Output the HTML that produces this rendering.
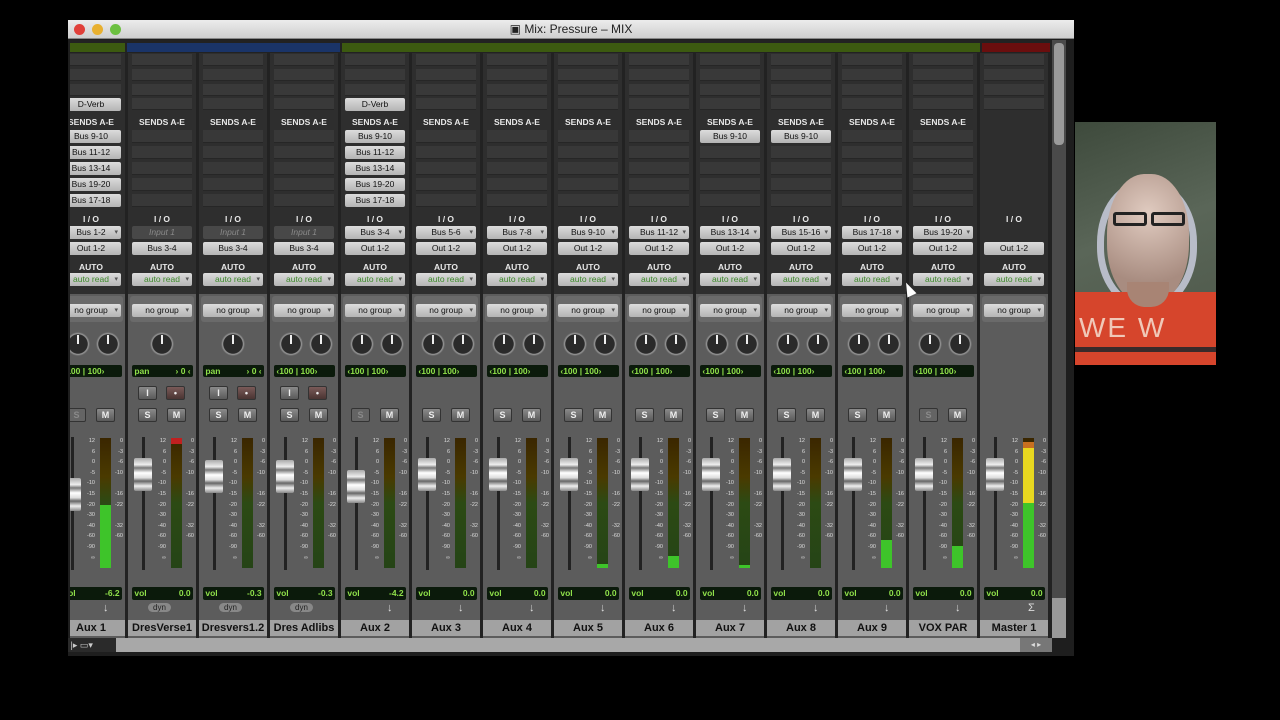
<!DOCTYPE html>
<html><head><meta charset="utf-8"><style>
*{margin:0;padding:0;box-sizing:border-box}
body{width:1280px;height:720px;background:#000;position:relative;overflow:hidden;font-family:"Liberation Sans",sans-serif}
.win{position:absolute;left:68px;top:20px;width:1006px;height:636px;background:#1e1e1e}
.title{position:absolute;left:0;top:0;width:1006px;height:19px;background:linear-gradient(#ececec,#cfcfcf);border-bottom:1px solid #888;font-size:12px;color:#222;text-align:center;line-height:19px}
.dot{position:absolute;top:4px;width:11px;height:11px;border-radius:50%}
.area{position:absolute;left:70px;top:40px;width:982px;height:598px;overflow:hidden;background:#222}
.cbar{position:absolute;top:3px;height:9px}
.s{position:absolute;top:13px;width:68px;height:585px;background:#2e2e2e}
.lo{position:absolute;left:0;top:241px;width:68px;height:344px;background:#5c5c5c}
.s div{position:absolute}
.sl{left:4px;width:60px;height:12px;background:#393939;border-bottom:1px solid #262626}
.ss{left:4px;width:60px;height:13px;background:#383838;border-bottom:1px solid #262626}
.lb{left:0;width:68px;text-align:center;font-size:8.5px;font-weight:bold;color:#e8e8e8}
.b{left:4px;width:60px;height:13px;background:linear-gradient(#dcdcdc,#b4b4b4);border-radius:2px;font-size:8.5px;color:#111;text-align:center;line-height:13px}
.b.dd:after{content:"▾";position:absolute;right:3px;top:0;font-size:7px;color:#555}
.b.dim{background:#484848;color:#8a8a8a;font-style:italic}
.ar{color:#3d8a2a}
.gp{left:2px;width:64px;height:26px;background:#6a6a6a;border-radius:3px}
.kn{width:24px;height:24px;border-radius:50%;background:radial-gradient(#2a2a2a 55%,#999 60%,#444 75%,#222 80%)}
.kn:after{content:"";position:absolute;left:11px;top:3px;width:2px;height:9px;background:#eee}
.dsp{left:4px;width:61px;height:12px;background:#0b1a0b;border-radius:2px;color:#8fe04a;font-size:8.5px;font-weight:bold;line-height:12px}
.sq{width:19px;height:14px;background:linear-gradient(#8a8a8a,#5a5a5a);border:1px solid #333;border-radius:2px;color:#eee;font-size:9px;font-weight:bold;text-align:center;line-height:12px}
.sq.d{color:#8a8a8a;background:#646464}
.rec{background:linear-gradient(#7a5a58,#4a3432)}
.trk{left:14px;top:384px;width:3px;height:133px;background:#222}
.cap{left:6px;width:18px;height:33px;background:linear-gradient(#aaa,#eee 20%,#777 30%,#fff 45%,#ddd 60%,#666 70%,#eee 85%,#888);border-radius:2px}
.sc{font-size:5.5px;color:#ddd;line-height:10.6px;text-align:right;width:12px}
.mt{left:43px;top:385px;width:11px;height:130px;background:linear-gradient(#3a2600,#4a3a00 30%,#2c4a14 50%,#254416)}
.mf{left:0;bottom:0;width:11px;background:#3ec42a}
.vol{left:4px;top:534px;width:61px;height:13px;background:#0b1a0b;border-radius:2px;color:#8fe04a;font-size:8.5px;font-weight:bold;line-height:13px}
.nm{left:0;top:567px;width:68px;height:16px;background:#a2a2a2;color:#111;font-size:11px;font-weight:bold;text-align:center;line-height:16px}
.ar2{color:#ddd;font-size:11px}
</style></head><body>
<div class="win">
<div class="title"><div class="dot" style="left:6px;background:#e0403a"></div><div class="dot" style="left:24px;background:#e8b030"></div><div class="dot" style="left:42px;background:#6cc040"></div>&#9635; Mix: Pressure –  MIX</div>
</div>
<div class="area">
<div class="cbar" style="left:0;width:55px;background:#3c5a10"></div>
<div class="cbar" style="left:57px;width:213px;background:#1a3468"></div>
<div class="cbar" style="left:272px;width:638px;background:#3c5a10"></div>
<div class="cbar" style="left:912px;width:68px;background:#6a0e0e"></div>

<div class="s" style="left:-13px"><div class="sl" style="top:1px"></div><div class="sl" style="top:16px"></div><div class="sl" style="top:31px"></div><div class="b" style="top:45px">D-Verb</div>
<div class="lb" style="top:64px">SENDS A-E</div><div class="b" style="top:77px">Bus 9-10</div><div class="b" style="top:93px">Bus 11-12</div><div class="b" style="top:109px">Bus 13-14</div><div class="b" style="top:125px">Bus 19-20</div><div class="b" style="top:141px">Bus 17-18</div>
<div class="lb" style="top:161px">I / O</div><div class="b dd" style="top:173px">Bus 1-2</div><div class="b" style="top:189px">Out 1-2</div><div class="lb" style="top:209px">AUTO</div><div class="b ar dd" style="top:220px">auto read</div>
<div class="lo"></div><div class="gp" style="top:243px"></div><div class="b dd" style="top:251px">no group</div>
<div class="kn" style="left:9px;top:279px"></div><div class="kn" style="left:39px;top:279px"></div><div class="dsp" style="top:312px">&nbsp;‹100 | 100›</div>
<div class="sq d" style="left:10px;top:355px">S</div><div class="sq" style="left:39px;top:355px">M</div>
<div class="trk"></div><div class="cap" style="top:425px"></div><div class="sc" style="left:26px;top:383px">12<br>6<br>0<br>-5<br>-10<br>-15<br>-20<br>-30<br>-40<br>-60<br>-90<br>∞</div><div class="mt"><div class="mf" style="height:63px"></div></div><div class="sc" style="left:54px;top:383px">0<br>-3<br>-6<br>-10<br><br>-16<br>-22<br><br>-32<br>-60</div>
<div class="vol">&nbsp;vol<span style="float:right">-6.2&nbsp;</span></div><div class="ar2" style="left:46px;top:549px">↓</div><div class="nm">Aux 1</div></div>

<div class="s" style="left:58px"><div class="sl" style="top:1px"></div><div class="sl" style="top:16px"></div><div class="sl" style="top:31px"></div><div class="sl" style="top:45px"></div>
<div class="lb" style="top:64px">SENDS A-E</div><div class="ss" style="top:77px"></div><div class="ss" style="top:93px"></div><div class="ss" style="top:109px"></div><div class="ss" style="top:125px"></div><div class="ss" style="top:141px"></div>
<div class="lb" style="top:161px">I / O</div><div class="b dim" style="top:173px">Input 1</div><div class="b" style="top:189px">Bus 3-4</div><div class="lb" style="top:209px">AUTO</div><div class="b ar dd" style="top:220px">auto read</div>
<div class="lo"></div><div class="gp" style="top:243px"></div><div class="b dd" style="top:251px">no group</div>
<div class="kn" style="left:22px;top:279px"></div><div class="dsp" style="top:312px">&nbsp;pan<span style="float:right">› 0 ‹&nbsp;</span></div>
<div class="sq" style="left:10px;top:333px">I</div><div class="sq rec" style="left:38px;top:333px">•</div>
<div class="sq" style="left:10px;top:355px">S</div><div class="sq" style="left:39px;top:355px">M</div>
<div class="trk"></div><div class="cap" style="top:405px"></div><div class="sc" style="left:26px;top:383px">12<br>6<br>0<br>-5<br>-10<br>-15<br>-20<br>-30<br>-40<br>-60<br>-90<br>∞</div><div class="mt"><div style="left:0;top:0;width:11px;height:6px;background:#c02020"></div></div><div class="sc" style="left:54px;top:383px">0<br>-3<br>-6<br>-10<br><br>-16<br>-22<br><br>-32<br>-60</div>
<div class="vol">&nbsp;vol<span style="float:right">0.0&nbsp;</span></div><div class="ar2" style="left:20px;top:550px;background:#888;border-radius:6px;color:#222;font-size:8px;padding:0 5px">dyn</div><div class="nm">DresVerse1</div></div>

<div class="s" style="left:129px"><div class="sl" style="top:1px"></div><div class="sl" style="top:16px"></div><div class="sl" style="top:31px"></div><div class="sl" style="top:45px"></div>
<div class="lb" style="top:64px">SENDS A-E</div><div class="ss" style="top:77px"></div><div class="ss" style="top:93px"></div><div class="ss" style="top:109px"></div><div class="ss" style="top:125px"></div><div class="ss" style="top:141px"></div>
<div class="lb" style="top:161px">I / O</div><div class="b dim" style="top:173px">Input 1</div><div class="b" style="top:189px">Bus 3-4</div><div class="lb" style="top:209px">AUTO</div><div class="b ar dd" style="top:220px">auto read</div>
<div class="lo"></div><div class="gp" style="top:243px"></div><div class="b dd" style="top:251px">no group</div>
<div class="kn" style="left:22px;top:279px"></div><div class="dsp" style="top:312px">&nbsp;pan<span style="float:right">› 0 ‹&nbsp;</span></div>
<div class="sq" style="left:10px;top:333px">I</div><div class="sq rec" style="left:38px;top:333px">•</div>
<div class="sq" style="left:10px;top:355px">S</div><div class="sq" style="left:39px;top:355px">M</div>
<div class="trk"></div><div class="cap" style="top:407px"></div><div class="sc" style="left:26px;top:383px">12<br>6<br>0<br>-5<br>-10<br>-15<br>-20<br>-30<br>-40<br>-60<br>-90<br>∞</div><div class="mt"></div><div class="sc" style="left:54px;top:383px">0<br>-3<br>-6<br>-10<br><br>-16<br>-22<br><br>-32<br>-60</div>
<div class="vol">&nbsp;vol<span style="float:right">-0.3&nbsp;</span></div><div class="ar2" style="left:20px;top:550px;background:#888;border-radius:6px;color:#222;font-size:8px;padding:0 5px">dyn</div><div class="nm">Dresvers1.2</div></div>

<div class="s" style="left:200px"><div class="sl" style="top:1px"></div><div class="sl" style="top:16px"></div><div class="sl" style="top:31px"></div><div class="sl" style="top:45px"></div>
<div class="lb" style="top:64px">SENDS A-E</div><div class="ss" style="top:77px"></div><div class="ss" style="top:93px"></div><div class="ss" style="top:109px"></div><div class="ss" style="top:125px"></div><div class="ss" style="top:141px"></div>
<div class="lb" style="top:161px">I / O</div><div class="b dim" style="top:173px">Input 1</div><div class="b" style="top:189px">Bus 3-4</div><div class="lb" style="top:209px">AUTO</div><div class="b ar dd" style="top:220px">auto read</div>
<div class="lo"></div><div class="gp" style="top:243px"></div><div class="b dd" style="top:251px">no group</div>
<div class="kn" style="left:9px;top:279px"></div><div class="kn" style="left:39px;top:279px"></div><div class="dsp" style="top:312px">&nbsp;‹100 | 100›</div>
<div class="sq" style="left:10px;top:333px">I</div><div class="sq rec" style="left:38px;top:333px">•</div>
<div class="sq" style="left:10px;top:355px">S</div><div class="sq" style="left:39px;top:355px">M</div>
<div class="trk"></div><div class="cap" style="top:407px"></div><div class="sc" style="left:26px;top:383px">12<br>6<br>0<br>-5<br>-10<br>-15<br>-20<br>-30<br>-40<br>-60<br>-90<br>∞</div><div class="mt"></div><div class="sc" style="left:54px;top:383px">0<br>-3<br>-6<br>-10<br><br>-16<br>-22<br><br>-32<br>-60</div>
<div class="vol">&nbsp;vol<span style="float:right">-0.3&nbsp;</span></div><div class="ar2" style="left:20px;top:550px;background:#888;border-radius:6px;color:#222;font-size:8px;padding:0 5px">dyn</div><div class="nm">Dres Adlibs</div></div>

<div class="s" style="left:271px"><div class="sl" style="top:1px"></div><div class="sl" style="top:16px"></div><div class="sl" style="top:31px"></div><div class="b" style="top:45px">D-Verb</div>
<div class="lb" style="top:64px">SENDS A-E</div><div class="b" style="top:77px">Bus 9-10</div><div class="b" style="top:93px">Bus 11-12</div><div class="b" style="top:109px">Bus 13-14</div><div class="b" style="top:125px">Bus 19-20</div><div class="b" style="top:141px">Bus 17-18</div>
<div class="lb" style="top:161px">I / O</div><div class="b dd" style="top:173px">Bus 3-4</div><div class="b" style="top:189px">Out 1-2</div><div class="lb" style="top:209px">AUTO</div><div class="b ar dd" style="top:220px">auto read</div>
<div class="lo"></div><div class="gp" style="top:243px"></div><div class="b dd" style="top:251px">no group</div>
<div class="kn" style="left:9px;top:279px"></div><div class="kn" style="left:39px;top:279px"></div><div class="dsp" style="top:312px">&nbsp;‹100 | 100›</div>
<div class="sq d" style="left:10px;top:355px">S</div><div class="sq" style="left:39px;top:355px">M</div>
<div class="trk"></div><div class="cap" style="top:417px"></div><div class="sc" style="left:26px;top:383px">12<br>6<br>0<br>-5<br>-10<br>-15<br>-20<br>-30<br>-40<br>-60<br>-90<br>∞</div><div class="mt"></div><div class="sc" style="left:54px;top:383px">0<br>-3<br>-6<br>-10<br><br>-16<br>-22<br><br>-32<br>-60</div>
<div class="vol">&nbsp;vol<span style="float:right">-4.2&nbsp;</span></div><div class="ar2" style="left:46px;top:549px">↓</div><div class="nm">Aux 2</div></div>

<div class="s" style="left:342px"><div class="sl" style="top:1px"></div><div class="sl" style="top:16px"></div><div class="sl" style="top:31px"></div><div class="sl" style="top:45px"></div>
<div class="lb" style="top:64px">SENDS A-E</div><div class="ss" style="top:77px"></div><div class="ss" style="top:93px"></div><div class="ss" style="top:109px"></div><div class="ss" style="top:125px"></div><div class="ss" style="top:141px"></div>
<div class="lb" style="top:161px">I / O</div><div class="b dd" style="top:173px">Bus 5-6</div><div class="b" style="top:189px">Out 1-2</div><div class="lb" style="top:209px">AUTO</div><div class="b ar dd" style="top:220px">auto read</div>
<div class="lo"></div><div class="gp" style="top:243px"></div><div class="b dd" style="top:251px">no group</div>
<div class="kn" style="left:9px;top:279px"></div><div class="kn" style="left:39px;top:279px"></div><div class="dsp" style="top:312px">&nbsp;‹100 | 100›</div>
<div class="sq" style="left:10px;top:355px">S</div><div class="sq" style="left:39px;top:355px">M</div>
<div class="trk"></div><div class="cap" style="top:405px"></div><div class="sc" style="left:26px;top:383px">12<br>6<br>0<br>-5<br>-10<br>-15<br>-20<br>-30<br>-40<br>-60<br>-90<br>∞</div><div class="mt"></div><div class="sc" style="left:54px;top:383px">0<br>-3<br>-6<br>-10<br><br>-16<br>-22<br><br>-32<br>-60</div>
<div class="vol">&nbsp;vol<span style="float:right">0.0&nbsp;</span></div><div class="ar2" style="left:46px;top:549px">↓</div><div class="nm">Aux 3</div></div>

<div class="s" style="left:413px"><div class="sl" style="top:1px"></div><div class="sl" style="top:16px"></div><div class="sl" style="top:31px"></div><div class="sl" style="top:45px"></div>
<div class="lb" style="top:64px">SENDS A-E</div><div class="ss" style="top:77px"></div><div class="ss" style="top:93px"></div><div class="ss" style="top:109px"></div><div class="ss" style="top:125px"></div><div class="ss" style="top:141px"></div>
<div class="lb" style="top:161px">I / O</div><div class="b dd" style="top:173px">Bus 7-8</div><div class="b" style="top:189px">Out 1-2</div><div class="lb" style="top:209px">AUTO</div><div class="b ar dd" style="top:220px">auto read</div>
<div class="lo"></div><div class="gp" style="top:243px"></div><div class="b dd" style="top:251px">no group</div>
<div class="kn" style="left:9px;top:279px"></div><div class="kn" style="left:39px;top:279px"></div><div class="dsp" style="top:312px">&nbsp;‹100 | 100›</div>
<div class="sq" style="left:10px;top:355px">S</div><div class="sq" style="left:39px;top:355px">M</div>
<div class="trk"></div><div class="cap" style="top:405px"></div><div class="sc" style="left:26px;top:383px">12<br>6<br>0<br>-5<br>-10<br>-15<br>-20<br>-30<br>-40<br>-60<br>-90<br>∞</div><div class="mt"></div><div class="sc" style="left:54px;top:383px">0<br>-3<br>-6<br>-10<br><br>-16<br>-22<br><br>-32<br>-60</div>
<div class="vol">&nbsp;vol<span style="float:right">0.0&nbsp;</span></div><div class="ar2" style="left:46px;top:549px">↓</div><div class="nm">Aux 4</div></div>

<div class="s" style="left:484px"><div class="sl" style="top:1px"></div><div class="sl" style="top:16px"></div><div class="sl" style="top:31px"></div><div class="sl" style="top:45px"></div>
<div class="lb" style="top:64px">SENDS A-E</div><div class="ss" style="top:77px"></div><div class="ss" style="top:93px"></div><div class="ss" style="top:109px"></div><div class="ss" style="top:125px"></div><div class="ss" style="top:141px"></div>
<div class="lb" style="top:161px">I / O</div><div class="b dd" style="top:173px">Bus 9-10</div><div class="b" style="top:189px">Out 1-2</div><div class="lb" style="top:209px">AUTO</div><div class="b ar dd" style="top:220px">auto read</div>
<div class="lo"></div><div class="gp" style="top:243px"></div><div class="b dd" style="top:251px">no group</div>
<div class="kn" style="left:9px;top:279px"></div><div class="kn" style="left:39px;top:279px"></div><div class="dsp" style="top:312px">&nbsp;‹100 | 100›</div>
<div class="sq" style="left:10px;top:355px">S</div><div class="sq" style="left:39px;top:355px">M</div>
<div class="trk"></div><div class="cap" style="top:405px"></div><div class="sc" style="left:26px;top:383px">12<br>6<br>0<br>-5<br>-10<br>-15<br>-20<br>-30<br>-40<br>-60<br>-90<br>∞</div><div class="mt"><div class="mf" style="height:4px"></div></div><div class="sc" style="left:54px;top:383px">0<br>-3<br>-6<br>-10<br><br>-16<br>-22<br><br>-32<br>-60</div>
<div class="vol">&nbsp;vol<span style="float:right">0.0&nbsp;</span></div><div class="ar2" style="left:46px;top:549px">↓</div><div class="nm">Aux 5</div></div>

<div class="s" style="left:555px"><div class="sl" style="top:1px"></div><div class="sl" style="top:16px"></div><div class="sl" style="top:31px"></div><div class="sl" style="top:45px"></div>
<div class="lb" style="top:64px">SENDS A-E</div><div class="ss" style="top:77px"></div><div class="ss" style="top:93px"></div><div class="ss" style="top:109px"></div><div class="ss" style="top:125px"></div><div class="ss" style="top:141px"></div>
<div class="lb" style="top:161px">I / O</div><div class="b dd" style="top:173px">Bus 11-12</div><div class="b" style="top:189px">Out 1-2</div><div class="lb" style="top:209px">AUTO</div><div class="b ar dd" style="top:220px">auto read</div>
<div class="lo"></div><div class="gp" style="top:243px"></div><div class="b dd" style="top:251px">no group</div>
<div class="kn" style="left:9px;top:279px"></div><div class="kn" style="left:39px;top:279px"></div><div class="dsp" style="top:312px">&nbsp;‹100 | 100›</div>
<div class="sq" style="left:10px;top:355px">S</div><div class="sq" style="left:39px;top:355px">M</div>
<div class="trk"></div><div class="cap" style="top:405px"></div><div class="sc" style="left:26px;top:383px">12<br>6<br>0<br>-5<br>-10<br>-15<br>-20<br>-30<br>-40<br>-60<br>-90<br>∞</div><div class="mt"><div class="mf" style="height:12px"></div></div><div class="sc" style="left:54px;top:383px">0<br>-3<br>-6<br>-10<br><br>-16<br>-22<br><br>-32<br>-60</div>
<div class="vol">&nbsp;vol<span style="float:right">0.0&nbsp;</span></div><div class="ar2" style="left:46px;top:549px">↓</div><div class="nm">Aux 6</div></div>

<div class="s" style="left:626px"><div class="sl" style="top:1px"></div><div class="sl" style="top:16px"></div><div class="sl" style="top:31px"></div><div class="sl" style="top:45px"></div>
<div class="lb" style="top:64px">SENDS A-E</div><div class="b" style="top:77px">Bus 9-10</div><div class="ss" style="top:93px"></div><div class="ss" style="top:109px"></div><div class="ss" style="top:125px"></div><div class="ss" style="top:141px"></div>
<div class="lb" style="top:161px">I / O</div><div class="b dd" style="top:173px">Bus 13-14</div><div class="b" style="top:189px">Out 1-2</div><div class="lb" style="top:209px">AUTO</div><div class="b ar dd" style="top:220px">auto read</div>
<div class="lo"></div><div class="gp" style="top:243px"></div><div class="b dd" style="top:251px">no group</div>
<div class="kn" style="left:9px;top:279px"></div><div class="kn" style="left:39px;top:279px"></div><div class="dsp" style="top:312px">&nbsp;‹100 | 100›</div>
<div class="sq" style="left:10px;top:355px">S</div><div class="sq" style="left:39px;top:355px">M</div>
<div class="trk"></div><div class="cap" style="top:405px"></div><div class="sc" style="left:26px;top:383px">12<br>6<br>0<br>-5<br>-10<br>-15<br>-20<br>-30<br>-40<br>-60<br>-90<br>∞</div><div class="mt"><div class="mf" style="height:3px"></div></div><div class="sc" style="left:54px;top:383px">0<br>-3<br>-6<br>-10<br><br>-16<br>-22<br><br>-32<br>-60</div>
<div class="vol">&nbsp;vol<span style="float:right">0.0&nbsp;</span></div><div class="ar2" style="left:46px;top:549px">↓</div><div class="nm">Aux 7</div></div>

<div class="s" style="left:697px"><div class="sl" style="top:1px"></div><div class="sl" style="top:16px"></div><div class="sl" style="top:31px"></div><div class="sl" style="top:45px"></div>
<div class="lb" style="top:64px">SENDS A-E</div><div class="b" style="top:77px">Bus 9-10</div><div class="ss" style="top:93px"></div><div class="ss" style="top:109px"></div><div class="ss" style="top:125px"></div><div class="ss" style="top:141px"></div>
<div class="lb" style="top:161px">I / O</div><div class="b dd" style="top:173px">Bus 15-16</div><div class="b" style="top:189px">Out 1-2</div><div class="lb" style="top:209px">AUTO</div><div class="b ar dd" style="top:220px">auto read</div>
<div class="lo"></div><div class="gp" style="top:243px"></div><div class="b dd" style="top:251px">no group</div>
<div class="kn" style="left:9px;top:279px"></div><div class="kn" style="left:39px;top:279px"></div><div class="dsp" style="top:312px">&nbsp;‹100 | 100›</div>
<div class="sq" style="left:10px;top:355px">S</div><div class="sq" style="left:39px;top:355px">M</div>
<div class="trk"></div><div class="cap" style="top:405px"></div><div class="sc" style="left:26px;top:383px">12<br>6<br>0<br>-5<br>-10<br>-15<br>-20<br>-30<br>-40<br>-60<br>-90<br>∞</div><div class="mt"></div><div class="sc" style="left:54px;top:383px">0<br>-3<br>-6<br>-10<br><br>-16<br>-22<br><br>-32<br>-60</div>
<div class="vol">&nbsp;vol<span style="float:right">0.0&nbsp;</span></div><div class="ar2" style="left:46px;top:549px">↓</div><div class="nm">Aux 8</div></div>

<div class="s" style="left:768px"><div class="sl" style="top:1px"></div><div class="sl" style="top:16px"></div><div class="sl" style="top:31px"></div><div class="sl" style="top:45px"></div>
<div class="lb" style="top:64px">SENDS A-E</div><div class="ss" style="top:77px"></div><div class="ss" style="top:93px"></div><div class="ss" style="top:109px"></div><div class="ss" style="top:125px"></div><div class="ss" style="top:141px"></div>
<div class="lb" style="top:161px">I / O</div><div class="b dd" style="top:173px">Bus 17-18</div><div class="b" style="top:189px">Out 1-2</div><div class="lb" style="top:209px">AUTO</div><div class="b ar dd" style="top:220px">auto read</div>
<div class="lo"></div><div class="gp" style="top:243px"></div><div class="b dd" style="top:251px">no group</div>
<div class="kn" style="left:9px;top:279px"></div><div class="kn" style="left:39px;top:279px"></div><div class="dsp" style="top:312px">&nbsp;‹100 | 100›</div>
<div class="sq" style="left:10px;top:355px">S</div><div class="sq" style="left:39px;top:355px">M</div>
<div class="trk"></div><div class="cap" style="top:405px"></div><div class="sc" style="left:26px;top:383px">12<br>6<br>0<br>-5<br>-10<br>-15<br>-20<br>-30<br>-40<br>-60<br>-90<br>∞</div><div class="mt"><div class="mf" style="height:28px"></div></div><div class="sc" style="left:54px;top:383px">0<br>-3<br>-6<br>-10<br><br>-16<br>-22<br><br>-32<br>-60</div>
<div class="vol">&nbsp;vol<span style="float:right">0.0&nbsp;</span></div><div class="ar2" style="left:46px;top:549px">↓</div><div class="nm">Aux 9</div></div>

<div class="s" style="left:839px"><div class="sl" style="top:1px"></div><div class="sl" style="top:16px"></div><div class="sl" style="top:31px"></div><div class="sl" style="top:45px"></div>
<div class="lb" style="top:64px">SENDS A-E</div><div class="ss" style="top:77px"></div><div class="ss" style="top:93px"></div><div class="ss" style="top:109px"></div><div class="ss" style="top:125px"></div><div class="ss" style="top:141px"></div>
<div class="lb" style="top:161px">I / O</div><div class="b dd" style="top:173px">Bus 19-20</div><div class="b" style="top:189px">Out 1-2</div><div class="lb" style="top:209px">AUTO</div><div class="b ar dd" style="top:220px">auto read</div>
<div class="lo"></div><div class="gp" style="top:243px"></div><div class="b dd" style="top:251px">no group</div>
<div class="kn" style="left:9px;top:279px"></div><div class="kn" style="left:39px;top:279px"></div><div class="dsp" style="top:312px">&nbsp;‹100 | 100›</div>
<div class="sq d" style="left:10px;top:355px">S</div><div class="sq" style="left:39px;top:355px">M</div>
<div class="trk"></div><div class="cap" style="top:405px"></div><div class="sc" style="left:26px;top:383px">12<br>6<br>0<br>-5<br>-10<br>-15<br>-20<br>-30<br>-40<br>-60<br>-90<br>∞</div><div class="mt"><div class="mf" style="height:22px"></div></div><div class="sc" style="left:54px;top:383px">0<br>-3<br>-6<br>-10<br><br>-16<br>-22<br><br>-32<br>-60</div>
<div class="vol">&nbsp;vol<span style="float:right">0.0&nbsp;</span></div><div class="ar2" style="left:46px;top:549px">↓</div><div class="nm">VOX PAR</div></div>

<div class="s" style="left:910px"><div class="sl" style="top:1px"></div><div class="sl" style="top:16px"></div><div class="sl" style="top:31px"></div><div class="sl" style="top:45px"></div>
<div class="lb" style="top:161px">I / O</div><div class="b" style="top:189px">Out 1-2</div><div class="lb" style="top:209px">AUTO</div><div class="b ar dd" style="top:220px">auto read</div>
<div class="lo"></div><div class="gp" style="top:243px"></div><div class="b dd" style="top:251px">no group</div>
<div class="trk"></div><div class="cap" style="top:405px"></div><div class="sc" style="left:26px;top:383px">12<br>6<br>0<br>-5<br>-10<br>-15<br>-20<br>-30<br>-40<br>-60<br>-90<br>∞</div><div class="mt"><div class="mf" style="height:65px"></div><div style="left:0;top:10px;width:11px;height:55px;background:#e8d820"></div><div style="left:0;top:4px;width:11px;height:6px;background:#c87020"></div></div><div class="sc" style="left:54px;top:383px">0<br>-3<br>-6<br>-10<br><br>-16<br>-22<br><br>-32<br>-60</div>
<div class="vol">&nbsp;vol<span style="float:right">0.0&nbsp;</span></div><div class="ar2" style="left:48px;top:549px">Σ</div><div class="nm">Master 1</div></div>
</div>

<div style="position:absolute;left:1052px;top:40px;width:14px;height:598px;background:#4a4a4a"></div>
<div style="position:absolute;left:1054px;top:43px;width:10px;height:102px;background:#9a9a9a;border-radius:4px"></div>
<div style="position:absolute;left:1052px;top:598px;width:14px;height:40px;background:#999"></div>
<div style="position:absolute;left:68px;top:638px;width:48px;height:14px;background:#2a2a2a;color:#ccc;font-size:9px;line-height:14px">&nbsp;|▸ ▭▾</div>
<div style="position:absolute;left:116px;top:638px;width:936px;height:14px;background:#a8a8a8"></div>
<div style="position:absolute;left:1020px;top:638px;width:32px;height:14px;background:#777;color:#ddd;font-size:8px;line-height:14px;text-align:center">◂ ▸</div>

<div style="position:absolute;left:1075px;top:122px;width:141px;height:243px;background:linear-gradient(160deg,#3e4a3c,#5a6658 45%,#4c5648);overflow:hidden">
<div style="position:absolute;left:22px;top:58px;width:100px;height:130px;border-radius:48%;border:7px solid #b8bcc8"></div>
<div style="position:absolute;left:32px;top:52px;width:82px;height:130px;border-radius:46%;background:radial-gradient(circle at 50% 30%,#e0cbc0,#a88c80 70%)"></div>
<div style="position:absolute;left:38px;top:90px;width:34px;height:14px;border:3px solid #222;border-radius:3px"></div>
<div style="position:absolute;left:76px;top:90px;width:34px;height:14px;border:3px solid #222;border-radius:3px"></div>
<div style="position:absolute;left:0;top:170px;width:141px;height:73px;background:#d6452c"></div>
<div style="position:absolute;left:52px;top:160px;width:42px;height:25px;background:#a88474;border-radius:0 0 18px 18px"></div>
<div style="position:absolute;left:0;top:225px;width:141px;height:5px;background:#3a2a2a"></div>
<div style="position:absolute;left:4px;top:190px;color:#f0c8b8;font-size:28px;letter-spacing:2px">WE W</div>
</div>
<div style="position:absolute;left:904px;top:282px;width:0;height:0;border-left:5px solid transparent;border-right:5px solid transparent;border-bottom:14px solid #fff;transform:rotate(-25deg)"></div>
</body></html>
